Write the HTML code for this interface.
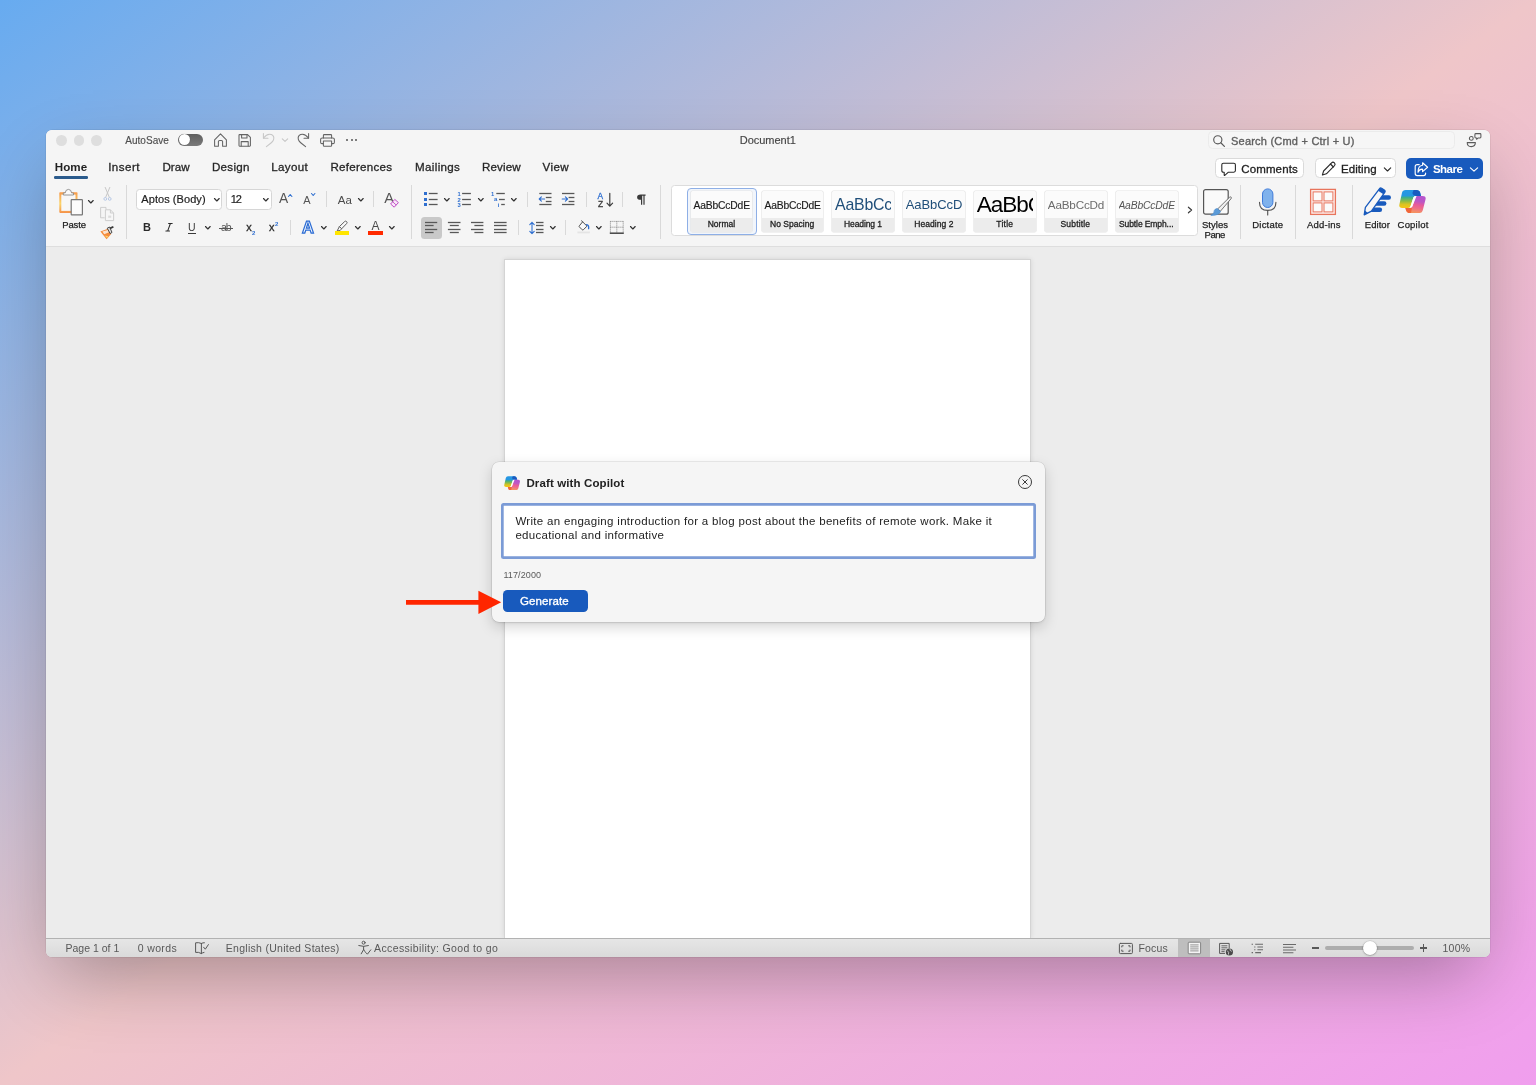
<!-- p00_head -->
<!DOCTYPE html>
<html lang="en"><head><meta charset="utf-8"><title>Document1</title>
<style>
html,body{margin:0;padding:0;}
body{width:1536px;height:1085px;overflow:hidden;position:relative;
 font-family:"Liberation Sans",sans-serif;
 background:linear-gradient(to bottom right,#67abf0 0%,#efc6c9 50%,#f09eee 100%);}
.b{position:absolute;box-sizing:border-box;display:block;}
.t{position:absolute;white-space:pre;line-height:normal;font-family:"Liberation Sans",sans-serif;}
#win{position:absolute;left:46px;top:130px;width:1444px;height:827px;border-radius:6px;
 background:#f5f5f5;box-shadow:0 0 0 0.5px rgba(0,0,0,0.10),0 28px 70px -12px rgba(0,0,0,0.31);}
#clip{position:absolute;left:46px;top:130px;width:1444px;height:827px;border-radius:6px;overflow:hidden;}
#abs{position:absolute;left:0;top:0;width:1536px;height:1085px;will-change:transform;}
.sep{position:absolute;width:1px;background:#dadada;}
.chev{position:absolute;}
</style></head><body>
<div id="win"></div>
<div id="clip"><div class="b" style="left:-46px;top:-130px;width:1536px;height:1085px;" id="inner">
<div class="b" style="left:46px;top:130px;width:1444px;height:117px;background:#f5f5f5;"></div>
<div class="b" style="left:46px;top:246px;width:1444px;height:1px;background:#dedede;"></div>
<div class="b" style="left:46px;top:247px;width:1444px;height:691px;background:#ececec;"></div>
<div class="b" style="left:46px;top:938px;width:1444px;height:19px;background:linear-gradient(#e5e5e5,#d9d9d9);border-top:1px solid #b4b4b4;"></div>
</div></div>
<div id="abs">
<!-- p10_titlebar -->
<div class="b" style="left:55.800000000000004px;top:134.79999999999998px;width:10.8px;height:10.8px;border-radius:50%;background:#dedede;"></div>
<div class="b" style="left:73.5px;top:134.79999999999998px;width:10.8px;height:10.8px;border-radius:50%;background:#dedede;"></div>
<div class="b" style="left:91.1px;top:134.79999999999998px;width:10.8px;height:10.8px;border-radius:50%;background:#dedede;"></div>
<span class="t" style="left:125.20px;top:134.90px;font-size:10px;color:#4e4e4e;letter-spacing:0.048px;-webkit-text-stroke:0.15px #4e4e4e;">AutoSave</span>
<div class="b" style="left:178px;top:133.6px;width:25px;height:12.6px;border-radius:6.3px;background:linear-gradient(#5f5f5f,#7a7a7a);"></div>
<div class="b" style="left:178.8px;top:134.3px;width:11.2px;height:11.2px;border-radius:50%;background:#fff;box-shadow:0 0 1px rgba(0,0,0,.4);"></div>
<svg class="b" style="left:213px;top:132px;" width="15" height="16" viewBox="0 0 15 16"><path fill="none" stroke="#646464" stroke-width="1.05" stroke-linecap="round" stroke-linejoin="round" d="M1.6 7.8 L7.5 1.9 L13.4 7.8 V14.3 H9.6 V9.6 Q9.6 8.4 8.4 8.4 H6.6 Q5.4 8.4 5.4 9.6 V14.3 H1.6 Z"/></svg>
<svg class="b" style="left:237px;top:132px;" width="15" height="16" viewBox="0 0 15 16"><path fill="none" stroke="#646464" stroke-width="1.05" stroke-linecap="round" stroke-linejoin="round" d="M2.6 2.6 H10.6 L13.4 5.4 V13.6 Q13.4 14.2 12.8 14.2 H2.6 Q2 14.2 2 13.6 V3.2 Q2 2.6 2.6 2.6 Z"/><path fill="none" stroke="#646464" stroke-width="1.05" stroke-linecap="round" stroke-linejoin="round" d="M4.6 2.8 V6 H10 V2.8"/><path fill="none" stroke="#646464" stroke-width="1.05" stroke-linecap="round" stroke-linejoin="round" d="M4.2 14 V9.6 H11.2 V14"/></svg>
<svg class="b" style="left:261px;top:131px;" width="15" height="17" viewBox="0 0 15 17"><path fill="none" stroke="#c6c6c6" stroke-width="1.05" stroke-linecap="round" stroke-linejoin="round" d="M2.4 2.6 V7.2 H7"/><path fill="none" stroke="#c6c6c6" stroke-width="1.05" stroke-linecap="round" stroke-linejoin="round" d="M2.6 7 Q6.2 2.2 10.4 3.6 Q13.6 5 12.6 8.6 Q12 10.4 10 12 L5.4 15.6"/></svg>
<svg class="b" style="left:281px;top:137px;" width="8" height="6" viewBox="0 0 8 6"><path fill="none" stroke="#c6c6c6" stroke-width="1.05" stroke-linecap="round" stroke-linejoin="round" d="M1.3 1.8 L4 4.4 L6.7 1.8"/></svg>
<svg class="b" style="left:296px;top:131px;" width="15" height="17" viewBox="0 0 15 17"><path fill="none" stroke="#646464" stroke-width="1.05" stroke-linecap="round" stroke-linejoin="round" d="M12.6 2.6 V7.2 H8"/><path fill="none" stroke="#646464" stroke-width="1.05" stroke-linecap="round" stroke-linejoin="round" d="M12.4 7 Q8.8 2.2 4.6 3.6 Q1.4 5 2.4 8.6 Q3 10.4 5 12 L9.6 15.6"/></svg>
<svg class="b" style="left:319px;top:132px;" width="17" height="16" viewBox="0 0 17 16"><path fill="none" stroke="#646464" stroke-width="1.05" stroke-linecap="round" stroke-linejoin="round" d="M4.4 6 V3.4 Q4.4 2.6 5.2 2.6 H11.8 Q12.6 2.6 12.6 3.4 V6"/><path fill="none" stroke="#646464" stroke-width="1.05" stroke-linecap="round" stroke-linejoin="round" d="M4.4 11.6 H3 Q1.6 11.6 1.6 10.2 V7.6 Q1.6 6 3.2 6 H13.8 Q15.4 6 15.4 7.6 V10.2 Q15.4 11.6 14 11.6 H12.6"/><path fill="none" stroke="#646464" stroke-width="1.05" stroke-linecap="round" stroke-linejoin="round" d="M4.4 9 H12.6 V13.4 Q12.6 14.2 11.8 14.2 H5.2 Q4.4 14.2 4.4 13.4 Z"/></svg>
<div class="b" style="left:345.9px;top:139.2px;width:2.2px;height:2.2px;border-radius:50%;background:#555;"></div>
<div class="b" style="left:350.59999999999997px;top:139.2px;width:2.2px;height:2.2px;border-radius:50%;background:#555;"></div>
<div class="b" style="left:355.29999999999995px;top:139.2px;width:2.2px;height:2.2px;border-radius:50%;background:#555;"></div>
<span class="t" style="left:739.80px;top:134.20px;font-size:11px;color:#444;letter-spacing:-0.031px;-webkit-text-stroke:0.15px #444;">Document1</span>
<div class="b" style="left:1207.5px;top:130.8px;width:247px;height:18.6px;border-radius:4.5px;background:#f6f6f6;border:1px solid #ebebeb;"></div>
<svg class="b" style="left:1211.5px;top:134px;" width="14" height="14" viewBox="0 0 14 14"><circle cx="5.8" cy="5.8" r="4.1" fill="none" stroke="#5a5a5a" stroke-width="1.15"/><path d="M8.8 8.8 L12.4 12.4" stroke="#5a5a5a" stroke-width="1.25" stroke-linecap="round"/></svg>
<span class="t" style="left:1231.00px;top:134.80px;font-size:11px;color:#606060;letter-spacing:0.219px;-webkit-text-stroke:0.35px #606060;">Search (Cmd + Ctrl + U)</span>
<svg class="b" style="left:1465px;top:131px;" width="18" height="18" viewBox="0 0 18 18"><circle cx="6.3" cy="7.4" r="1.9" fill="none" stroke="#5a5a5a" stroke-width="1.05" stroke-linecap="round" stroke-linejoin="round"/><path fill="none" stroke="#5a5a5a" stroke-width="1.05" stroke-linecap="round" stroke-linejoin="round" d="M2.2 11.6 H10.4 Q10.4 15.6 6.3 15.6 Q2.2 15.6 2.2 11.6 Z"/><path fill="none" stroke="#5a5a5a" stroke-width="1.05" stroke-linecap="round" stroke-linejoin="round" d="M10.8 2.6 H15 Q15.9 2.6 15.9 3.5 V6 Q15.9 6.9 15 6.9 H13.2 L11.6 8.3 V6.9 H10.8 Q9.9 6.9 9.9 6 V3.5 Q9.9 2.6 10.8 2.6 Z"/></svg>
<!-- p20_tabs -->
<span class="t" style="left:54.80px;top:160.20px;font-size:11.6px;color:#1f1f1f;font-weight:bold;letter-spacing:0.024px;">Home</span>
<div class="b" style="left:54.3px;top:176.4px;width:33.4px;height:2.5px;background:#2b5b8c;border-radius:1.2px;"></div>
<span class="t" style="left:108.20px;top:160.20px;font-size:11.6px;color:#262626;letter-spacing:0.458px;-webkit-text-stroke:0.3px #262626;">Insert</span>
<span class="t" style="left:162.40px;top:160.20px;font-size:11.6px;color:#262626;letter-spacing:0.077px;-webkit-text-stroke:0.3px #262626;">Draw</span>
<span class="t" style="left:211.90px;top:160.20px;font-size:11.6px;color:#262626;letter-spacing:0.318px;-webkit-text-stroke:0.3px #262626;">Design</span>
<span class="t" style="left:271.25px;top:160.20px;font-size:11.6px;color:#262626;letter-spacing:0.324px;-webkit-text-stroke:0.3px #262626;">Layout</span>
<span class="t" style="left:330.40px;top:160.20px;font-size:11.6px;color:#262626;letter-spacing:0.253px;-webkit-text-stroke:0.3px #262626;">References</span>
<span class="t" style="left:415.10px;top:160.20px;font-size:11.6px;color:#262626;letter-spacing:0.322px;-webkit-text-stroke:0.3px #262626;">Mailings</span>
<span class="t" style="left:482.00px;top:160.20px;font-size:11.6px;color:#262626;letter-spacing:0.113px;-webkit-text-stroke:0.3px #262626;">Review</span>
<span class="t" style="left:542.40px;top:160.20px;font-size:11.6px;color:#262626;letter-spacing:0.472px;-webkit-text-stroke:0.3px #262626;">View</span>
<div class="b" style="left:1214.6px;top:158.4px;width:89.8px;height:20.1px;border-radius:4.5px;background:#fff;border:1px solid #dadada;"></div>
<svg class="b" style="left:1220px;top:160.5px;" width="18" height="17" viewBox="0 0 18 17"><path fill="none" stroke="#2a2a2a" stroke-width="1.1" stroke-linecap="round" stroke-linejoin="round" d="M3.4 2.2 H13.8 Q15.4 2.2 15.4 3.8 V9.6 Q15.4 11.2 13.8 11.2 H8.4 L4.8 14.4 Q4.2 14.8 4.2 14 V11.2 H3.4 Q1.8 11.2 1.8 9.6 V3.8 Q1.8 2.2 3.4 2.2 Z"/></svg>
<span class="t" style="left:1241.20px;top:162.80px;font-size:11.5px;color:#222;letter-spacing:0.143px;-webkit-text-stroke:0.3px #222;">Comments</span>
<div class="b" style="left:1314.5px;top:158.4px;width:81.7px;height:20.1px;border-radius:4.5px;background:#fff;border:1px solid #dadada;"></div>
<svg class="b" style="left:1320px;top:160px;" width="18" height="18" viewBox="0 0 18 18"><path fill="none" stroke="#2a2a2a" stroke-width="1.1" stroke-linecap="round" stroke-linejoin="round" d="M11.6 2.8 Q13 1.5 14.4 2.9 Q15.8 4.3 14.5 5.7 L6.4 13.8 L2.4 15 L3.6 11 Z"/><path fill="none" stroke="#2a2a2a" stroke-width="1.1" stroke-linecap="round" stroke-linejoin="round" d="M10.4 4 L13.4 7"/></svg>
<span class="t" style="left:1341.00px;top:162.80px;font-size:11.5px;color:#222;letter-spacing:0.073px;-webkit-text-stroke:0.3px #222;">Editing</span>
<svg class="b" style="left:1383px;top:165.5px;" width="9" height="7" viewBox="0 0 9 7"><path fill="none" stroke="#2a2a2a" stroke-width="1.1" stroke-linecap="round" stroke-linejoin="round" d="M1.3 1.8 L4.5 5 L7.7 1.8"/></svg>
<div class="b" style="left:1406px;top:157.9px;width:76.8px;height:21px;border-radius:5px;background:#185abd;"></div>
<svg class="b" style="left:1413px;top:160.5px;" width="17" height="17" viewBox="0 0 17 17"><path fill="none" stroke="#fff" stroke-width="1.15" stroke-linecap="round" stroke-linejoin="round" d="M6.2 3.6 H4.2 Q2.2 3.6 2.2 5.6 V12.6 Q2.2 14.6 4.2 14.6 H10.6 Q12.6 14.6 12.6 12.6 V12"/><path fill="none" stroke="#fff" stroke-width="1.15" stroke-linecap="round" stroke-linejoin="round" d="M9.6 1.8 L14.6 6.2 L9.6 10.6 V8.2 Q6.4 8 5 11.2 Q5 4.6 9.6 4.2 Z"/></svg>
<span class="t" style="left:1432.90px;top:162.80px;font-size:11.5px;color:#fff;font-weight:bold;letter-spacing:-0.491px;">Share</span>
<svg class="b" style="left:1468.5px;top:165.5px;" width="10" height="7" viewBox="0 0 10 7"><path fill="none" stroke="#fff" stroke-width="1.15" stroke-linecap="round" stroke-linejoin="round" d="M1.4 1.8 L5 5.2 L8.6 1.8"/></svg>
<!-- p30_ribbon_left -->
<svg class="b" style="left:58px;top:187.6px;" width="27" height="29" viewBox="0 0 27 29"><defs><linearGradient id="pg" x1="0" y1="0" x2="0" y2="1"><stop offset="0" stop-color="#f59a4c"/><stop offset="0.55" stop-color="#fbd56a"/><stop offset="1" stop-color="#f5934a"/></linearGradient></defs><rect x="1.3" y="4.3" width="18.2" height="20.6" rx="0.8" fill="url(#pg)"/><rect x="3.3" y="6.6" width="14.2" height="16.3" fill="#f7f7f7"/><path d="M5.3 7.0 V4.9 H7.2 Q7.6 1.4 10.4 1.4 Q13.2 1.4 13.6 4.9 H15.5 V7.0 Z" fill="#fafafa" stroke="#8a8a8a" stroke-width="0.9" stroke-linejoin="round"/><rect x="13.2" y="11.6" width="11.2" height="15.2" rx="0.6" fill="#fbfbfb" stroke="#767676" stroke-width="1.2"/></svg>
<svg class="b" style="left:86.55px;top:199.05px;" width="7.7" height="5.5" viewBox="0 0 7.7 5.5"><path fill="none" stroke="#333" stroke-width="1.15" stroke-linecap="round" stroke-linejoin="round" d="M1.5 1.5 L3.85 4.0 L6.2 1.5"/></svg>
<span class="t" style="left:62.20px;top:218.70px;font-size:9.5px;color:#222;letter-spacing:-0.098px;-webkit-text-stroke:0.25px #222;">Paste</span>
<svg class="b" style="left:101px;top:186px;" width="13" height="16" viewBox="0 0 13 16"><path d="M4.2 1.4 L8.2 11 M8.8 1.4 L4.8 11" stroke="#c4c4c4" stroke-width="0.95" fill="none" stroke-linecap="round"/><circle cx="4.3" cy="12.9" r="1.4" fill="none" stroke="#b3c5e4" stroke-width="0.95"/><circle cx="8.7" cy="12.9" r="1.4" fill="none" stroke="#b3c5e4" stroke-width="0.95"/></svg>
<svg class="b" style="left:99px;top:206px;" width="17" height="16" viewBox="0 0 17 16"><path d="M5.6 11.8 H1.6 V1.4 H7 V3.6" fill="none" stroke="#cbcbcb" stroke-width="0.95" stroke-linejoin="round"/><path d="M6.4 3.8 H11.4 L14.6 7 V14.6 H6.4 Z" fill="#f7f7f7" stroke="#cbcbcb" stroke-width="0.95" stroke-linejoin="round"/><path d="M11.4 3.8 V7 H14.6" fill="none" stroke="#cbcbcb" stroke-width="0.95"/><rect x="9.2" y="9.6" width="3" height="2.2" fill="#dcdcdc"/></svg>
<svg class="b" style="left:99px;top:225px;" width="17" height="16" viewBox="0 0 17 16"><path d="M1.4 6.4 L9.6 3.4 L12.2 9 L7.6 14.2 Z" fill="#f58b3c"/><path d="M3.4 6.6 L9 4.9 L10 7.2 L5.2 9.2 Z" fill="#fbe3cf"/><path d="M5.6 10.6 L8 13 L9.4 11.2 Z" fill="#fbd56a"/><path d="M8.2 3.2 L10.6 2 L13 7.4 L11.2 8.6 Z" fill="#dedede" stroke="#3a3a3a" stroke-width="0.9" stroke-linejoin="round"/><path d="M10.6 2.6 L14 0.9 L14.8 2.4 L11.4 4.2 Z" fill="#3a3a3a"/></svg>
<div class="b" style="left:125.7px;top:185px;width:1px;height:53.599999999999994px;background:#d9d9d9;"></div>
<div class="b" style="left:135.8px;top:189.4px;width:86.7px;height:20.6px;border-radius:3.5px;background:#fff;border:1px solid #d6d6d6;"></div>
<span class="t" style="left:141.30px;top:193.20px;font-size:11px;color:#1e1e1e;letter-spacing:0.065px;-webkit-text-stroke:0.2px #1e1e1e;">Aptos (Body)</span>
<svg class="b" style="left:212.55px;top:197.35px;" width="7.7" height="5.5" viewBox="0 0 7.7 5.5"><path fill="none" stroke="#333" stroke-width="1.15" stroke-linecap="round" stroke-linejoin="round" d="M1.5 1.5 L3.85 4.0 L6.2 1.5"/></svg>
<div class="b" style="left:225.6px;top:189.4px;width:46.7px;height:20.6px;border-radius:3.5px;background:#fff;border:1px solid #d6d6d6;"></div>
<span class="t" style="left:230.80px;top:193.20px;font-size:11px;color:#1e1e1e;letter-spacing:-1.200px;-webkit-text-stroke:0.2px #1e1e1e;">12</span>
<svg class="b" style="left:262.15px;top:197.35px;" width="7.7" height="5.5" viewBox="0 0 7.7 5.5"><path fill="none" stroke="#333" stroke-width="1.15" stroke-linecap="round" stroke-linejoin="round" d="M1.5 1.5 L3.85 4.0 L6.2 1.5"/></svg>
<span class="t" style="left:279.00px;top:191.30px;font-size:13.8px;color:#555;">A</span>
<svg class="b" style="left:286.8px;top:192.7px;" width="6.4" height="5.0" viewBox="0 0 6.4 5.0"><path fill="none" stroke="#2f6fd0" stroke-width="1.1" stroke-linecap="round" stroke-linejoin="round" d="M1.5 3.5 L3.2 1.5 L4.9 3.5"/></svg>
<span class="t" style="left:303.20px;top:193.70px;font-size:11px;color:#555;">A</span>
<svg class="b" style="left:310.0px;top:192.1px;" width="6.4" height="5.0" viewBox="0 0 6.4 5.0"><path fill="none" stroke="#2f6fd0" stroke-width="1.1" stroke-linecap="round" stroke-linejoin="round" d="M1.5 1.5 L3.2 3.5 L4.9 1.5"/></svg>
<div class="b" style="left:326.0px;top:191.3px;width:1px;height:16.099999999999994px;background:#d9d9d9;"></div>
<span class="t" style="left:337.80px;top:193.70px;font-size:11.5px;color:#4a4a4a;letter-spacing:0.134px;">Aa</span>
<svg class="b" style="left:356.55px;top:197.35px;" width="7.7" height="5.5" viewBox="0 0 7.7 5.5"><path fill="none" stroke="#333" stroke-width="1.15" stroke-linecap="round" stroke-linejoin="round" d="M1.5 1.5 L3.85 4.0 L6.2 1.5"/></svg>
<div class="b" style="left:372.8px;top:191.3px;width:1px;height:16.099999999999994px;background:#d9d9d9;"></div>
<span class="t" style="left:384.20px;top:190.40px;font-size:14.6px;color:#555;">A</span>
<svg class="b" style="left:389px;top:197.5px;" width="11" height="11" viewBox="0 0 11 11"><path d="M5.8 1.4 L9.4 4.6 L5.2 9.2 L1.6 6 Z" fill="#f8e9f8" stroke="#c04cc6" stroke-width="1" stroke-linejoin="round"/><path d="M3.7 3.8 L7.2 7" stroke="#c04cc6" stroke-width="0.9"/></svg>
<div class="b" style="left:411.1px;top:185px;width:1px;height:53.599999999999994px;background:#d9d9d9;"></div>
<span class="t" style="left:143.10px;top:221.00px;font-size:11px;color:#2a2a2a;font-weight:bold;">B</span>
<svg class="b" style="left:164.5px;top:222px;" width="9" height="10" viewBox="0 0 9 10"><path d="M3.6 1.5 H7.2 M0.9 8.9 H4.5 M5.4 1.5 L2.7 8.9" fill="none" stroke="#2a2a2a" stroke-width="1.05" stroke-linecap="round"/></svg>
<span class="t" style="left:188.00px;top:221.00px;font-size:10.5px;color:#3a3a3a;">U</span>
<div class="b" style="left:187.8px;top:232.5px;width:7.8px;height:1px;background:#3a3a3a;"></div>
<svg class="b" style="left:204.25px;top:225.35px;" width="7.7" height="5.5" viewBox="0 0 7.7 5.5"><path fill="none" stroke="#333" stroke-width="1.15" stroke-linecap="round" stroke-linejoin="round" d="M1.5 1.5 L3.85 4.0 L6.2 1.5"/></svg>
<span class="t" style="left:221.10px;top:221.00px;font-size:10.5px;color:#555;letter-spacing:-1.200px;">ab</span>
<div class="b" style="left:219px;top:227.8px;width:14px;height:1px;background:#555;"></div>
<span class="t" style="left:246.30px;top:221.00px;font-size:11px;color:#2a2a2a;-webkit-text-stroke:0.3px #2a2a2a;">x</span>
<span class="t" style="left:251.90px;top:229.90px;font-size:6px;color:#2f6fd0;font-weight:bold;">2</span>
<span class="t" style="left:268.90px;top:221.00px;font-size:11px;color:#2a2a2a;-webkit-text-stroke:0.3px #2a2a2a;">x</span>
<span class="t" style="left:274.90px;top:220.70px;font-size:6px;color:#2f6fd0;font-weight:bold;">2</span>
<div class="b" style="left:289.5px;top:220px;width:1px;height:15.400000000000006px;background:#d9d9d9;"></div>
<span class="t" style="left:301.90px;top:218.30px;font-size:16.5px;color:#ffffff;font-weight:bold;-webkit-text-stroke:1.25px #2b6cd4;">A</span>
<svg class="b" style="left:320.15px;top:225.35px;" width="7.7" height="5.5" viewBox="0 0 7.7 5.5"><path fill="none" stroke="#333" stroke-width="1.15" stroke-linecap="round" stroke-linejoin="round" d="M1.5 1.5 L3.85 4.0 L6.2 1.5"/></svg>
<svg class="b" style="left:335px;top:219.5px;" width="15" height="13" viewBox="0 0 15 13"><path d="M9.6 1.6 Q10.6 0.6 11.6 1.6 Q12.6 2.6 11.6 3.6 L6.6 8.8 L4.4 6.6 Z" fill="#fafafa" stroke="#555" stroke-width="0.95" stroke-linejoin="round"/><path d="M4.4 6.6 L6.6 8.8 L5 10.6 L2.2 10.8 Z" fill="#fafafa" stroke="#555" stroke-width="0.95" stroke-linejoin="round"/></svg>
<div class="b" style="left:334.5px;top:231.3px;width:14.3px;height:3.7px;background:#ffe500;"></div>
<svg class="b" style="left:353.75px;top:225.35px;" width="7.7" height="5.5" viewBox="0 0 7.7 5.5"><path fill="none" stroke="#333" stroke-width="1.15" stroke-linecap="round" stroke-linejoin="round" d="M1.5 1.5 L3.85 4.0 L6.2 1.5"/></svg>
<span class="t" style="left:371.50px;top:218.80px;font-size:12px;color:#4a4a4a;">A</span>
<div class="b" style="left:368.4px;top:231.3px;width:14.2px;height:3.7px;background:#ff2a00;"></div>
<svg class="b" style="left:387.55px;top:225.35px;" width="7.7" height="5.5" viewBox="0 0 7.7 5.5"><path fill="none" stroke="#333" stroke-width="1.15" stroke-linecap="round" stroke-linejoin="round" d="M1.5 1.5 L3.85 4.0 L6.2 1.5"/></svg>
<!-- p40_ribbon_mid -->
<div class="b" style="left:423.6px;top:192.27px;width:3.2px;height:3.0px;background:#2f6fd0;"></div>
<svg class="b" style="left:428px;top:192px;" width="11" height="3" viewBox="0 0 11 3"><rect x="0.8" y="0.85" width="8.8" height="1.3" fill="#585858"/></svg>
<div class="b" style="left:423.6px;top:197.96px;width:3.2px;height:3.0px;background:#2f6fd0;"></div>
<svg class="b" style="left:428px;top:198px;" width="11" height="3" viewBox="0 0 11 3"><rect x="0.8" y="0.85" width="8.8" height="1.3" fill="#585858"/></svg>
<div class="b" style="left:423.6px;top:203.17px;width:3.2px;height:3.0px;background:#2f6fd0;"></div>
<svg class="b" style="left:428px;top:203px;" width="11" height="3" viewBox="0 0 11 3"><rect x="0.8" y="0.85" width="8.8" height="1.3" fill="#585858"/></svg>
<svg class="b" style="left:443.35px;top:197.25px;" width="7.7" height="5.5" viewBox="0 0 7.7 5.5"><path fill="none" stroke="#333" stroke-width="1.15" stroke-linecap="round" stroke-linejoin="round" d="M1.5 1.5 L3.85 4.0 L6.2 1.5"/></svg>
<span class="t" style="left:457.60px;top:190.87px;font-size:5.8px;color:#2f6fd0;font-weight:bold;">1</span>
<svg class="b" style="left:462px;top:192px;" width="10" height="3" viewBox="0 0 10 3"><rect x="0.1" y="0.85" width="8.8" height="1.3" fill="#585858"/></svg>
<span class="t" style="left:457.60px;top:196.56px;font-size:5.8px;color:#2f6fd0;font-weight:bold;">2</span>
<svg class="b" style="left:462px;top:198px;" width="10" height="3" viewBox="0 0 10 3"><rect x="0.1" y="0.85" width="8.8" height="1.3" fill="#585858"/></svg>
<span class="t" style="left:457.60px;top:201.77px;font-size:5.8px;color:#2f6fd0;font-weight:bold;">3</span>
<svg class="b" style="left:462px;top:203px;" width="10" height="3" viewBox="0 0 10 3"><rect x="0.1" y="0.85" width="8.8" height="1.3" fill="#585858"/></svg>
<svg class="b" style="left:476.65px;top:197.25px;" width="7.7" height="5.5" viewBox="0 0 7.7 5.5"><path fill="none" stroke="#333" stroke-width="1.15" stroke-linecap="round" stroke-linejoin="round" d="M1.5 1.5 L3.85 4.0 L6.2 1.5"/></svg>
<span class="t" style="left:491.00px;top:190.87px;font-size:5.8px;color:#2f6fd0;font-weight:bold;">1</span>
<svg class="b" style="left:496px;top:192px;" width="10" height="3" viewBox="0 0 10 3"><rect x="0.3" y="0.85" width="8.5" height="1.3" fill="#585858"/></svg>
<span class="t" style="left:494.00px;top:196.46px;font-size:6px;color:#2f6fd0;font-weight:bold;">a</span>
<svg class="b" style="left:499px;top:198px;" width="7" height="3" viewBox="0 0 7 3"><rect x="0.0" y="0.85" width="5.8" height="1.3" fill="#585858"/></svg>
<span class="t" style="left:497.80px;top:201.77px;font-size:5.8px;color:#2f6fd0;font-weight:bold;">i</span>
<svg class="b" style="left:501px;top:203px;" width="5" height="3" viewBox="0 0 5 3"><rect x="0.2" y="0.85" width="3.6" height="1.3" fill="#585858"/></svg>
<svg class="b" style="left:510.45px;top:197.25px;" width="7.7" height="5.5" viewBox="0 0 7.7 5.5"><path fill="none" stroke="#333" stroke-width="1.15" stroke-linecap="round" stroke-linejoin="round" d="M1.5 1.5 L3.85 4.0 L6.2 1.5"/></svg>
<div class="b" style="left:527.1px;top:191.8px;width:1px;height:15.399999999999977px;background:#d9d9d9;"></div>
<svg class="b" style="left:539px;top:192px;" width="14" height="3" viewBox="0 0 14 3"><rect x="0.3" y="0.85" width="12.2" height="1.3" fill="#585858"/></svg>
<svg class="b" style="left:539px;top:203px;" width="14" height="3" viewBox="0 0 14 3"><rect x="0.3" y="0.85" width="12.2" height="1.3" fill="#585858"/></svg>
<svg class="b" style="left:545px;top:196px;" width="8" height="3" viewBox="0 0 8 3"><rect x="0.8" y="0.85" width="5.7" height="1.3" fill="#585858"/></svg>
<svg class="b" style="left:545px;top:200px;" width="8" height="3" viewBox="0 0 8 3"><rect x="0.8" y="0.85" width="5.7" height="1.3" fill="#585858"/></svg>
<svg class="b" style="left:538.3px;top:196.4px;" width="8" height="6" viewBox="0 0 8 6"><path d="M1.2 3 H6.6 M3.4 0.9 L1.2 3 L3.4 5.1" fill="none" stroke="#2f6fd0" stroke-width="1.1" stroke-linecap="round" stroke-linejoin="round"/></svg>
<svg class="b" style="left:562px;top:192px;" width="14" height="3" viewBox="0 0 14 3"><rect x="0.0" y="0.85" width="12.4" height="1.3" fill="#585858"/></svg>
<svg class="b" style="left:562px;top:203px;" width="14" height="3" viewBox="0 0 14 3"><rect x="0.0" y="0.85" width="12.4" height="1.3" fill="#585858"/></svg>
<svg class="b" style="left:568px;top:196px;" width="8" height="3" viewBox="0 0 8 3"><rect x="0.6" y="0.85" width="5.8" height="1.3" fill="#585858"/></svg>
<svg class="b" style="left:568px;top:200px;" width="8" height="3" viewBox="0 0 8 3"><rect x="0.6" y="0.85" width="5.8" height="1.3" fill="#585858"/></svg>
<svg class="b" style="left:561.0px;top:196.4px;" width="8" height="6" viewBox="0 0 8 6"><path d="M1.2 3 H6.6 M4.4 0.9 L6.6 3 L4.4 5.1" fill="none" stroke="#2f6fd0" stroke-width="1.1" stroke-linecap="round" stroke-linejoin="round"/></svg>
<div class="b" style="left:586.0px;top:191.8px;width:1px;height:15.399999999999977px;background:#d9d9d9;"></div>
<span class="t" style="left:597.50px;top:191.10px;font-size:8.4px;color:#2f6fd0;-webkit-text-stroke:0.3px #2f6fd0;">A</span>
<span class="t" style="left:598.00px;top:198.50px;font-size:8.4px;color:#3a3a3a;-webkit-text-stroke:0.3px #3a3a3a;">Z</span>
<svg class="b" style="left:604.5px;top:192px;" width="10" height="16" viewBox="0 0 10 16"><path d="M4.8 1.2 V14 M2.0 11.2 L4.8 14.2 L7.6 11.2" fill="none" stroke="#3a3a3a" stroke-width="1.15" stroke-linecap="round" stroke-linejoin="round"/></svg>
<div class="b" style="left:621.8px;top:191.8px;width:1px;height:15.399999999999977px;background:#d9d9d9;"></div>
<svg class="b" style="left:635.6px;top:194px;" width="11" height="12" viewBox="0 0 11 12"><path d="M4.6 0.6 H9.6 V1.8 H8.6 V10.8 H7.4 V1.8 H6.2 V10.8 H5.0 V5.8 H4.6 Q1.1 5.8 1.1 3.2 Q1.1 0.6 4.6 0.6 Z" fill="#3a3a3a"/></svg>
<div class="b" style="left:660.1px;top:185px;width:1px;height:53.599999999999994px;background:#d9d9d9;"></div>
<div class="b" style="left:420.5px;top:217px;width:21.3px;height:21.5px;background:#c9c9c9;border-radius:3.5px;"></div>
<svg class="b" style="left:425px;top:221px;" width="14" height="3" viewBox="0 0 14 3"><rect x="0.0" y="0.85" width="12.2" height="1.3" fill="#585858"/></svg>
<svg class="b" style="left:447px;top:221px;" width="15" height="3" viewBox="0 0 15 3"><rect x="0.9" y="0.85" width="12.6" height="1.3" fill="#585858"/></svg>
<svg class="b" style="left:471px;top:221px;" width="14" height="3" viewBox="0 0 14 3"><rect x="0.0" y="0.85" width="12.4" height="1.3" fill="#585858"/></svg>
<svg class="b" style="left:494px;top:221px;" width="14" height="3" viewBox="0 0 14 3"><rect x="0.0" y="0.85" width="12.6" height="1.3" fill="#585858"/></svg>
<svg class="b" style="left:536px;top:221px;" width="9" height="3" viewBox="0 0 9 3"><rect x="0.0" y="0.85" width="7.5" height="1.3" fill="#585858"/></svg>
<svg class="b" style="left:425px;top:224px;" width="10" height="3" viewBox="0 0 10 3"><rect x="0.0" y="0.85" width="8.6" height="1.3" fill="#585858"/></svg>
<svg class="b" style="left:449px;top:224px;" width="11" height="3" viewBox="0 0 11 3"><rect x="0.8" y="0.85" width="9.0" height="1.3" fill="#585858"/></svg>
<svg class="b" style="left:474px;top:224px;" width="11" height="3" viewBox="0 0 11 3"><rect x="0.4" y="0.85" width="9.0" height="1.3" fill="#585858"/></svg>
<svg class="b" style="left:494px;top:224px;" width="14" height="3" viewBox="0 0 14 3"><rect x="0.0" y="0.85" width="12.6" height="1.3" fill="#585858"/></svg>
<svg class="b" style="left:536px;top:224px;" width="9" height="3" viewBox="0 0 9 3"><rect x="0.0" y="0.85" width="7.5" height="1.3" fill="#585858"/></svg>
<svg class="b" style="left:425px;top:228px;" width="14" height="3" viewBox="0 0 14 3"><rect x="0.0" y="0.85" width="12.2" height="1.3" fill="#585858"/></svg>
<svg class="b" style="left:447px;top:228px;" width="15" height="3" viewBox="0 0 15 3"><rect x="0.9" y="0.85" width="12.6" height="1.3" fill="#585858"/></svg>
<svg class="b" style="left:471px;top:228px;" width="14" height="3" viewBox="0 0 14 3"><rect x="0.0" y="0.85" width="12.4" height="1.3" fill="#585858"/></svg>
<svg class="b" style="left:494px;top:228px;" width="14" height="3" viewBox="0 0 14 3"><rect x="0.0" y="0.85" width="12.6" height="1.3" fill="#585858"/></svg>
<svg class="b" style="left:536px;top:228px;" width="9" height="3" viewBox="0 0 9 3"><rect x="0.0" y="0.85" width="7.5" height="1.3" fill="#585858"/></svg>
<svg class="b" style="left:425px;top:231px;" width="10" height="3" viewBox="0 0 10 3"><rect x="0.0" y="0.85" width="8.6" height="1.3" fill="#585858"/></svg>
<svg class="b" style="left:449px;top:231px;" width="11" height="3" viewBox="0 0 11 3"><rect x="0.8" y="0.85" width="9.0" height="1.3" fill="#585858"/></svg>
<svg class="b" style="left:474px;top:231px;" width="11" height="3" viewBox="0 0 11 3"><rect x="0.4" y="0.85" width="9.0" height="1.3" fill="#585858"/></svg>
<svg class="b" style="left:494px;top:231px;" width="14" height="3" viewBox="0 0 14 3"><rect x="0.0" y="0.85" width="12.6" height="1.3" fill="#585858"/></svg>
<svg class="b" style="left:536px;top:231px;" width="9" height="3" viewBox="0 0 9 3"><rect x="0.0" y="0.85" width="7.5" height="1.3" fill="#585858"/></svg>
<div class="b" style="left:518.1px;top:220.1px;width:1px;height:15.200000000000017px;background:#d9d9d9;"></div>
<svg class="b" style="left:527.6px;top:220.8px;" width="8" height="14" viewBox="0 0 8 14"><path d="M4 1.4 V12.6 M1.8 3.6 L4 1.3 L6.2 3.6 M1.8 10.4 L4 12.7 L6.2 10.4" fill="none" stroke="#2f6fd0" stroke-width="1.1" stroke-linecap="round" stroke-linejoin="round"/></svg>
<svg class="b" style="left:548.55px;top:225.45px;" width="7.7" height="5.5" viewBox="0 0 7.7 5.5"><path fill="none" stroke="#333" stroke-width="1.15" stroke-linecap="round" stroke-linejoin="round" d="M1.5 1.5 L3.85 4.0 L6.2 1.5"/></svg>
<div class="b" style="left:564.8px;top:220.1px;width:1px;height:15.200000000000017px;background:#d9d9d9;"></div>
<svg class="b" style="left:577px;top:220.3px;" width="14.5" height="14.5" viewBox="0 0 16 16"><path d="M6.2 2.0 L11.0 6.8 L7.0 10.8 Q6.4 11.4 5.8 10.8 L2.6 7.6 Q2.0 7.0 2.6 6.4 Z" fill="#fafafa" stroke="#444" stroke-width="1.05" stroke-linejoin="round"/><path d="M6.2 2.0 L5.0 0.9" stroke="#444" stroke-width="1.05" stroke-linecap="round"/><path d="M10.6 5.2 Q13.4 5.4 12.8 9.6" fill="none" stroke="#2f6fd0" stroke-width="1.5" stroke-linecap="round"/><rect x="0.4" y="12.7" width="13.8" height="2" fill="#e4e4e4"/></svg>
<svg class="b" style="left:595.35px;top:225.45px;" width="7.7" height="5.5" viewBox="0 0 7.7 5.5"><path fill="none" stroke="#333" stroke-width="1.15" stroke-linecap="round" stroke-linejoin="round" d="M1.5 1.5 L3.85 4.0 L6.2 1.5"/></svg>
<svg class="b" style="left:609px;top:220.3px;" width="16" height="15" viewBox="0 0 16 15"><path d="M1.4 1.4 H14.2 M1.4 1.4 V13 M14.2 1.4 V13 M7.8 1.4 V13 M1.4 7.2 H14.2" fill="none" stroke="#777" stroke-width="0.9" stroke-dasharray="1 1"/><path d="M0.8 13.2 H14.8" stroke="#444" stroke-width="1.5"/></svg>
<svg class="b" style="left:629.35px;top:225.45px;" width="7.7" height="5.5" viewBox="0 0 7.7 5.5"><path fill="none" stroke="#333" stroke-width="1.15" stroke-linecap="round" stroke-linejoin="round" d="M1.5 1.5 L3.85 4.0 L6.2 1.5"/></svg>
<!-- p50_styles -->
<div class="b" style="left:671px;top:185px;width:527px;height:51px;border-radius:3.5px;background:#fff;border:1px solid #dcdcdc;"></div>
<div class="b" style="left:686.6px;top:187.5px;width:70.0px;height:47.0px;border-radius:4px;background:#f1f5fb;border:1.5px solid #8eafe6;"></div>
<div class="b" style="left:690.6px;top:191.1px;width:61.9px;height:40.6px;border-radius:1.5px;overflow:hidden;background:#fbfbfb;box-shadow:0 0 0 0.6px #e3e3e3;">
<div class="b" style="left:0px;top:26.6px;width:61.9px;height:14px;background:#ececec;"></div>
<div class="b" style="left:2.6px;top:0;width:56.5px;height:27px;overflow:hidden;"><span class="t" style="left:0.40px;top:8.60px;font-size:10.3px;color:#1a1a1a;letter-spacing:-0.172px;-webkit-text-stroke:0.15px #1a1a1a;">AaBbCcDdEe</span></div>
</div>
<span class="t" style="left:707.70px;top:219.00px;font-size:8.5px;color:#1f1f1f;-webkit-text-stroke:0.3px #1f1f1f;">Normal</span>
<div class="b" style="left:761.5px;top:191.1px;width:61.9px;height:40.6px;border-radius:1.5px;overflow:hidden;background:#fbfbfb;box-shadow:0 0 0 0.6px #e3e3e3;">
<div class="b" style="left:0px;top:26.6px;width:61.9px;height:14px;background:#ececec;"></div>
<div class="b" style="left:2.6px;top:0;width:56.5px;height:27px;overflow:hidden;"><span class="t" style="left:0.40px;top:8.60px;font-size:10.3px;color:#1a1a1a;letter-spacing:-0.172px;-webkit-text-stroke:0.15px #1a1a1a;">AaBbCcDdEe</span></div>
</div>
<span class="t" style="left:770.00px;top:219.00px;font-size:8.5px;color:#1f1f1f;letter-spacing:0.028px;-webkit-text-stroke:0.3px #1f1f1f;">No Spacing</span>
<div class="b" style="left:832.4px;top:191.1px;width:61.9px;height:40.6px;border-radius:1.5px;overflow:hidden;background:#fbfbfb;box-shadow:0 0 0 0.6px #e3e3e3;">
<div class="b" style="left:0px;top:26.6px;width:61.9px;height:14px;background:#ececec;"></div>
<div class="b" style="left:2.6px;top:0;width:56.5px;height:27px;overflow:hidden;"><span class="t" style="left:0.10px;top:5.00px;font-size:15.9px;color:#1f4e79;letter-spacing:-0.219px;">AaBbCcD</span></div>
</div>
<span class="t" style="left:844.00px;top:219.00px;font-size:8.5px;color:#1f1f1f;letter-spacing:-0.107px;-webkit-text-stroke:0.3px #1f1f1f;">Heading 1</span>
<div class="b" style="left:903.3px;top:191.1px;width:61.9px;height:40.6px;border-radius:1.5px;overflow:hidden;background:#fbfbfb;box-shadow:0 0 0 0.6px #e3e3e3;">
<div class="b" style="left:0px;top:26.6px;width:61.9px;height:14px;background:#ececec;"></div>
<div class="b" style="left:2.6px;top:0;width:56.5px;height:27px;overflow:hidden;"><span class="t" style="left:-0.20px;top:6.10px;font-size:13.0px;color:#1f4e79;letter-spacing:-0.058px;">AaBbCcDd</span></div>
</div>
<span class="t" style="left:914.20px;top:219.00px;font-size:8.5px;color:#1f1f1f;letter-spacing:0.068px;-webkit-text-stroke:0.3px #1f1f1f;">Heading 2</span>
<div class="b" style="left:974.2px;top:191.1px;width:61.9px;height:40.6px;border-radius:1.5px;overflow:hidden;background:#fbfbfb;box-shadow:0 0 0 0.6px #e3e3e3;">
<div class="b" style="left:0px;top:26.6px;width:61.9px;height:14px;background:#ececec;"></div>
<div class="b" style="left:2.6px;top:0;width:56.5px;height:27px;overflow:hidden;"><span class="t" style="left:-0.10px;top:0.80px;font-size:22.5px;color:#000;letter-spacing:-0.998px;">AaBbC</span></div>
</div>
<span class="t" style="left:996.30px;top:219.00px;font-size:8.5px;color:#1f1f1f;letter-spacing:0.239px;-webkit-text-stroke:0.3px #1f1f1f;">Title</span>
<div class="b" style="left:1045.1px;top:191.1px;width:61.9px;height:40.6px;border-radius:1.5px;overflow:hidden;background:#fbfbfb;box-shadow:0 0 0 0.6px #e3e3e3;">
<div class="b" style="left:0px;top:26.6px;width:61.9px;height:14px;background:#ececec;"></div>
<div class="b" style="left:2.6px;top:0;width:56.5px;height:27px;overflow:hidden;"><span class="t" style="left:0.10px;top:6.50px;font-size:11.7px;color:#6c6c6c;letter-spacing:-0.185px;">AaBbCcDdE</span></div>
</div>
<span class="t" style="left:1060.50px;top:219.00px;font-size:8.5px;color:#1f1f1f;letter-spacing:0.178px;-webkit-text-stroke:0.3px #1f1f1f;">Subtitle</span>
<div class="b" style="left:1116.0px;top:191.1px;width:61.9px;height:40.6px;border-radius:1.5px;overflow:hidden;background:#fbfbfb;box-shadow:0 0 0 0.6px #e3e3e3;">
<div class="b" style="left:0px;top:26.6px;width:61.9px;height:14px;background:#ececec;"></div>
<div class="b" style="left:2.6px;top:0;width:56.5px;height:27px;overflow:hidden;"><span class="t" style="left:-0.20px;top:8.60px;font-size:10.3px;color:#555;letter-spacing:-0.150px;font-style:italic;">AaBbCcDdEe</span></div>
</div>
<span class="t" style="left:1119.00px;top:219.00px;font-size:8.5px;color:#1f1f1f;letter-spacing:-0.096px;-webkit-text-stroke:0.3px #1f1f1f;">Subtle Emph...</span>
<svg class="b" style="left:1186px;top:205.3px;" width="8" height="10" viewBox="0 0 8 10"><path d="M2.4 2.2 L5.6 5 L2.4 7.8" fill="none" stroke="#3a3a3a" stroke-width="1.15" stroke-linecap="round" stroke-linejoin="round"/></svg>
<!-- p60_ribbon_right -->
<svg class="b" style="left:1201px;top:187px;" width="32" height="31" viewBox="0 0 32 31"><rect x="2.6" y="2.6" width="24.6" height="24.6" rx="2" fill="#fafafa" stroke="#555" stroke-width="1.2"/>
<path d="M28.4 10.4 Q29.6 9.4 30.2 10.2 Q30.8 11 29.8 12 L19.4 24.2 L16.6 22 Z" fill="#f0f0f0" stroke="#666" stroke-width="0.9" stroke-linejoin="round"/>
<path d="M16.4 21.6 L19.6 24.4 Q18.2 28.6 9.8 28.4 Q13.6 26.6 13.2 23.6 Q14.4 21.2 16.4 21.6 Z" fill="#5b9bd8" stroke="#4a89cc" stroke-width="0.6"/></svg>
<span class="t" style="left:1201.90px;top:218.60px;font-size:9.5px;color:#222;letter-spacing:0.046px;-webkit-text-stroke:0.25px #222;">Styles</span>
<span class="t" style="left:1204.60px;top:228.80px;font-size:9.5px;color:#222;letter-spacing:-0.529px;-webkit-text-stroke:0.25px #222;">Pane</span>
<div class="b" style="left:1240.0px;top:185px;width:1px;height:54px;background:#d9d9d9;"></div>
<svg class="b" style="left:1257px;top:186.5px;" width="22" height="30" viewBox="0 0 22 30"><rect x="5.5" y="1.9" width="10.4" height="18.6" rx="5.2" fill="#80b2ec" stroke="#3d7ad9" stroke-width="1"/>
<path d="M2.5 15.4 Q2.5 23.4 10.7 23.4 Q18.9 23.4 18.9 15.4" fill="none" stroke="#555" stroke-width="1.15" stroke-linecap="round"/>
<path d="M10.7 23.6 V28" stroke="#555" stroke-width="1.15" stroke-linecap="round"/></svg>
<span class="t" style="left:1252.30px;top:218.60px;font-size:9.5px;color:#222;letter-spacing:0.189px;-webkit-text-stroke:0.25px #222;">Dictate</span>
<div class="b" style="left:1295.0px;top:185px;width:1px;height:54px;background:#d9d9d9;"></div>
<svg class="b" style="left:1308px;top:186.5px;" width="30" height="30" viewBox="0 0 30 30"><rect x="2.6" y="2.4" width="24.8" height="25" fill="#fdf1ee" stroke="#e8745c" stroke-width="1.3"/>
<rect x="5.1" y="4.9" width="8.9" height="9" fill="#fbfbfb" stroke="#e8745c" stroke-width="1"/>
<rect x="16" y="4.9" width="8.9" height="9" fill="#fbfbfb" stroke="#e8745c" stroke-width="1"/>
<rect x="5.1" y="15.9" width="8.9" height="9" fill="#fbfbfb" stroke="#e8745c" stroke-width="1"/>
<rect x="16" y="15.9" width="8.9" height="9" fill="#fbfbfb" stroke="#e8745c" stroke-width="1"/></svg>
<span class="t" style="left:1306.90px;top:218.60px;font-size:9.5px;color:#222;letter-spacing:0.231px;-webkit-text-stroke:0.25px #222;">Add-ins</span>
<div class="b" style="left:1351.8px;top:185px;width:1px;height:54px;background:#d9d9d9;"></div>
<svg class="b" style="left:1362px;top:186px;" width="31" height="31" viewBox="0 0 31 31"><g fill="#185abd">
<path d="M19 9.2 H26.8 Q29 9.2 29 11.45 Q29 13.7 26.8 13.7 H16 Z"/>
<path d="M15 15.3 H22.2 Q24.4 15.3 24.4 17.5 Q24.4 19.7 22.2 19.7 H12 Z"/>
<path d="M11 21.5 H17.9 Q20.1 21.5 20.1 23.7 Q20.1 25.9 17.9 25.9 H7.6 Z"/>
</g>
<path d="M17.6 2.6 Q18.4 1.5 19.6 2.2 L22.6 4.3 Q23.6 5.1 22.9 6.2 L9.4 25.2 L2.2 28.8 L3.4 21.4 Z" fill="#f7f7f7" stroke="#185abd" stroke-width="1.3" stroke-linejoin="round"/>
<path d="M17.6 2.6 Q18.4 1.5 19.6 2.2 L22.6 4.3 Q23.6 5.1 22.9 6.2 L21.4 8.3 L16.1 4.7 Z" fill="#185abd"/>
<path d="M2.2 28.8 L2.9 24.6 L5.9 26.9 Z" fill="#185abd"/></svg>
<span class="t" style="left:1364.80px;top:218.60px;font-size:9.5px;color:#222;letter-spacing:0.037px;-webkit-text-stroke:0.25px #222;">Editor</span>
<svg class="b" style="left:1399.4px;top:189.8px;" width="27" height="23.1" viewBox="0 0 27 23.1"><defs>
<linearGradient id="cpL" x1="0" y1="0" x2="0" y2="1"><stop offset="0" stop-color="#2798e4"/><stop offset="0.32" stop-color="#2596e0"/><stop offset="0.42" stop-color="#3fae8a"/><stop offset="0.62" stop-color="#8dbb45"/><stop offset="0.8" stop-color="#dcc420"/><stop offset="1" stop-color="#f6c616"/></linearGradient>
<linearGradient id="cpR" x1="0.2" y1="0" x2="0" y2="1"><stop offset="0" stop-color="#b655cc"/><stop offset="0.22" stop-color="#bd57c4"/><stop offset="0.42" stop-color="#e85a9a"/><stop offset="0.62" stop-color="#ee6e88"/><stop offset="0.8" stop-color="#f38a6a"/><stop offset="1" stop-color="#f79a52"/></linearGradient>
</defs>
<path d="M6.6 0 H17.4 Q20.4 0 21.2 2.8 L22 5.9 H16.6 Q14.9 5.9 14.4 7.5 L11.6 16 Q11 17.9 9 17.9 H3.2 Q-0.4 17.9 0.4 14.4 L3 2.8 Q3.7 0 6.6 0 Z" fill="url(#cpL)"/>
<path d="M14.6 0 H17.4 Q20.4 0 21.2 2.8 L22 5.9 H17.4 Q14.2 5.9 13.4 3 Z" fill="#1a5bbf"/>
<path d="M17.2 6 H23.4 Q27.4 6 26.5 9.6 L23.8 20.2 Q23 23.1 20 23.1 H10.4 Q7.8 23.1 7.1 20.6 L6.4 17.9 H11 Q12.9 17.9 13.5 16.1 L16.1 7.6 Q16.5 6 17.2 6 Z" fill="url(#cpR)"/>
<path d="M6.4 17.9 H11 Q12.4 17.9 13.1 17 L12 23.1 H10.4 Q7.8 23.1 7.1 20.6 Z" fill="#f0663a"/>
<path d="M16.6 5.9 H17.6 L13.3 16.6 Q12.9 17.9 11 17.9 L14.4 7.5 Q14.9 5.9 16.6 5.9 Z" fill="#fdfdfd"/></svg>
<span class="t" style="left:1397.60px;top:218.60px;font-size:9.5px;color:#222;letter-spacing:0.188px;-webkit-text-stroke:0.25px #222;">Copilot</span>
<!-- p70_doc -->
<div class="b" style="left:504px;top:259px;width:527px;height:679.4px;background:#fff;border:1px solid #d4d4d4;border-bottom:none;box-shadow:0 0 5px rgba(0,0,0,0.10);"></div>
<!-- p80_dialog -->
<div class="b" style="left:492px;top:462px;width:552.6px;height:160px;border-radius:7px;background:#f5f5f5;box-shadow:0 0 0 0.5px rgba(0,0,0,0.13),0 5px 14px rgba(0,0,0,0.17),0 1px 3px rgba(0,0,0,0.08);"></div>
<svg class="b" style="left:503.8px;top:475.8px;" width="16.2" height="14.4" viewBox="0 0 27 23.1"><defs>
<linearGradient id="cpL2" x1="0" y1="0" x2="0" y2="1"><stop offset="0" stop-color="#2798e4"/><stop offset="0.32" stop-color="#2596e0"/><stop offset="0.42" stop-color="#3fae8a"/><stop offset="0.62" stop-color="#8dbb45"/><stop offset="0.8" stop-color="#dcc420"/><stop offset="1" stop-color="#f6c616"/></linearGradient>
<linearGradient id="cpR2" x1="0.2" y1="0" x2="0" y2="1"><stop offset="0" stop-color="#b655cc"/><stop offset="0.22" stop-color="#bd57c4"/><stop offset="0.42" stop-color="#e85a9a"/><stop offset="0.62" stop-color="#ee6e88"/><stop offset="0.8" stop-color="#f38a6a"/><stop offset="1" stop-color="#f79a52"/></linearGradient>
</defs>
<path d="M6.6 0 H17.4 Q20.4 0 21.2 2.8 L22 5.9 H16.6 Q14.9 5.9 14.4 7.5 L11.6 16 Q11 17.9 9 17.9 H3.2 Q-0.4 17.9 0.4 14.4 L3 2.8 Q3.7 0 6.6 0 Z" fill="url(#cpL2)"/>
<path d="M14.6 0 H17.4 Q20.4 0 21.2 2.8 L22 5.9 H17.4 Q14.2 5.9 13.4 3 Z" fill="#1a5bbf"/>
<path d="M17.2 6 H23.4 Q27.4 6 26.5 9.6 L23.8 20.2 Q23 23.1 20 23.1 H10.4 Q7.8 23.1 7.1 20.6 L6.4 17.9 H11 Q12.9 17.9 13.5 16.1 L16.1 7.6 Q16.5 6 17.2 6 Z" fill="url(#cpR2)"/>
<path d="M6.4 17.9 H11 Q12.4 17.9 13.1 17 L12 23.1 H10.4 Q7.8 23.1 7.1 20.6 Z" fill="#f0663a"/>
<path d="M16.6 5.9 H17.6 L13.3 16.6 Q12.9 17.9 11 17.9 L14.4 7.5 Q14.9 5.9 16.6 5.9 Z" fill="#fdfdfd"/></svg>
<span class="t" style="left:526.40px;top:476.50px;font-size:11.5px;color:#222;font-weight:bold;letter-spacing:0.122px;">Draft with Copilot</span>
<svg class="b" style="left:1017px;top:473.8px;" width="16" height="16" viewBox="0 0 16 16"><circle cx="8" cy="8" r="6.5" fill="none" stroke="#3a3a3a" stroke-width="1"/><path d="M5.7 5.7 L10.3 10.3 M10.3 5.7 L5.7 10.3" stroke="#3a3a3a" stroke-width="1" stroke-linecap="round"/></svg>
<div class="b" style="left:501px;top:502.9px;width:534.5px;height:56.4px;border-radius:2.5px;background:#fff;box-shadow:inset 0 0 0 2.7px #7b9bd6;"></div>
<span class="t" style="left:515.40px;top:515.40px;font-size:11.5px;color:#222;letter-spacing:0.309px;">Write an engaging introduction for a blog post about the benefits of remote work. Make it</span>
<span class="t" style="left:515.40px;top:529.40px;font-size:11.5px;color:#222;letter-spacing:0.302px;">educational and informative</span>
<span class="t" style="left:503.40px;top:570.10px;font-size:9px;color:#5a5a5a;letter-spacing:0.119px;">117/2000</span>
<div class="b" style="left:502.8px;top:590.4px;width:85.1px;height:21.2px;border-radius:4.5px;background:#185abd;"></div>
<span class="t" style="left:520.00px;top:595.10px;font-size:11.5px;color:#fff;letter-spacing:0.107px;-webkit-text-stroke:0.35px #fff;">Generate</span>
<svg class="b" style="left:404px;top:587.6px;" width="100" height="28" viewBox="0 0 100 28"><path d="M2 11.9 H74.4 V2.7 L97.2 14.3 L74.4 25.9 V16.7 H2 Z" fill="#ff2600"/></svg>
<!-- p90_status -->
<div class="b" style="left:46px;top:938px;width:1444px;height:19px;border-radius:0 0 6px 6px;background:linear-gradient(#e6e6e6,#dadada);border-top:1px solid #b2b2b2;"></div>
<span class="t" style="left:65.40px;top:941.90px;font-size:10.5px;color:#585858;letter-spacing:0.019px;">Page 1 of 1</span>
<span class="t" style="left:137.70px;top:941.90px;font-size:10.5px;color:#585858;letter-spacing:0.372px;">0 words</span>
<svg class="b" style="left:194px;top:940.5px;" width="16" height="14" viewBox="0 0 16 14"><path fill="none" stroke="#585858" stroke-width="1" stroke-linecap="round" stroke-linejoin="round" d="M7.4 2.4 V12.6 M7.4 2.4 Q4.6 1.2 1.6 1.8 V11.4 Q4.6 10.8 7.4 12.6 Q8.6 11.6 10 11.4"/><path fill="none" stroke="#585858" stroke-width="1" stroke-linecap="round" stroke-linejoin="round" d="M7.4 2.4 Q9 1.6 10.4 1.7"/><path fill="none" stroke="#585858" stroke-width="1" stroke-linecap="round" stroke-linejoin="round" d="M9.6 6.2 L11.3 8.2 L14.4 3.6"/></svg>
<span class="t" style="left:225.80px;top:941.90px;font-size:10.5px;color:#585858;letter-spacing:0.278px;">English (United States)</span>
<svg class="b" style="left:357px;top:940.3px;" width="16" height="16" viewBox="0 0 16 16"><circle cx="6.6" cy="2.7" r="1.5" fill="none" stroke="#585858" stroke-width="1" stroke-linecap="round" stroke-linejoin="round"/><path fill="none" stroke="#585858" stroke-width="1" stroke-linecap="round" stroke-linejoin="round" d="M1.8 5.6 Q6.6 7.2 11.4 5.6 M6.6 6.6 V9.6 M6.6 9.6 L4.2 13.8 M6.6 9.6 L8 11.6"/><path fill="none" stroke="#585858" stroke-width="1" stroke-linecap="round" stroke-linejoin="round" d="M8.6 12.4 L10.4 14.2 L13.8 9.8"/></svg>
<span class="t" style="left:374.10px;top:941.90px;font-size:10.5px;color:#585858;letter-spacing:0.364px;">Accessibility: Good to go</span>
<svg class="b" style="left:1118px;top:941.5px;" width="16" height="13" viewBox="0 0 16 13"><rect x="1.4" y="1.4" width="13" height="10.2" rx="1" fill="none" stroke="#585858" stroke-width="1" stroke-linecap="round" stroke-linejoin="round"/><path fill="none" stroke="#585858" stroke-width="1" stroke-linecap="round" stroke-linejoin="round" d="M3.8 5 V3.8 H5.2 M10.6 3.8 H12 V5 M12 8 V9.2 H10.6 M5.2 9.2 H3.8 V8" stroke-width="0.9"/></svg>
<span class="t" style="left:1138.40px;top:941.90px;font-size:10.5px;color:#585858;letter-spacing:0.202px;">Focus</span>
<div class="b" style="left:1177.5px;top:939px;width:32.5px;height:18px;background:#bebebe;"></div>
<svg class="b" style="left:1186.5px;top:941px;" width="15" height="14" viewBox="0 0 15 14"><rect x="1.2" y="1.2" width="12.4" height="11.6" rx="0.8" fill="#f4f4f4" stroke="#858585" stroke-width="1"/><path d="M3.2 3.9 H11.6 M3.2 5.9 H11.6 M3.2 7.9 H11.6 M3.2 9.9 H11.6" stroke="#8a8a8a" stroke-width="0.9"/></svg>
<svg class="b" style="left:1217.5px;top:941.5px;" width="17" height="15" viewBox="0 0 17 15"><path d="M1.6 1.4 H11.2 V6.4 M1.6 1.4 V11.4 H7" fill="none" stroke="#585858" stroke-width="1"/><path d="M3.4 3.8 H9.4 M3.4 5.8 H9.4 M3.4 7.8 H7.4 M3.4 9.6 H6.6" stroke="#585858" stroke-width="0.9"/><circle cx="11.4" cy="10" r="3.6" fill="#4a4a4a"/><path d="M9.2 8.6 Q11.4 10 10.4 12.6 M12 6.8 Q11.4 8.6 13.8 9.4" stroke="#dcdcdc" stroke-width="0.8" fill="none"/></svg>
<svg class="b" style="left:1250px;top:942px;" width="15" height="13" viewBox="0 0 15 13"><path d="M1.6 2.2 H3 M5.2 2.2 H13 M4.2 5 H5.4 M7.4 5 H13 M4.2 7.8 H5.4 M7.4 7.8 H13 M1.6 10.6 H3 M5.2 10.6 H11" stroke="#6a6a6a" stroke-width="1.05" fill="none"/></svg>
<svg class="b" style="left:1281.5px;top:942px;" width="15" height="13" viewBox="0 0 15 13"><path d="M1 2.4 H14 M1 5.2 H11.4 M1 8 H14 M1 10.8 H11.4" stroke="#6a6a6a" stroke-width="1.05" fill="none"/></svg>
<div class="b" style="left:1312px;top:947.2px;width:7.2px;height:1.6px;background:#585858;"></div>
<div class="b" style="left:1325px;top:946.2px;width:89px;height:3.6px;background:#adadad;border-radius:2px;"></div>
<div class="b" style="left:1362.5px;top:941px;width:14px;height:14px;background:#fff;border-radius:50%;box-shadow:0 0.5px 2px rgba(0,0,0,0.35),0 0 0 0.5px rgba(0,0,0,0.08);"></div>
<div class="b" style="left:1419.6px;top:947.2px;width:7.4px;height:1.6px;background:#585858;"></div>
<div class="b" style="left:1422.5px;top:944.3px;width:1.6px;height:7.4px;background:#585858;"></div>
<span class="t" style="left:1442.40px;top:941.90px;font-size:10.5px;color:#585858;letter-spacing:0.315px;">100%</span>
</div></body></html>
